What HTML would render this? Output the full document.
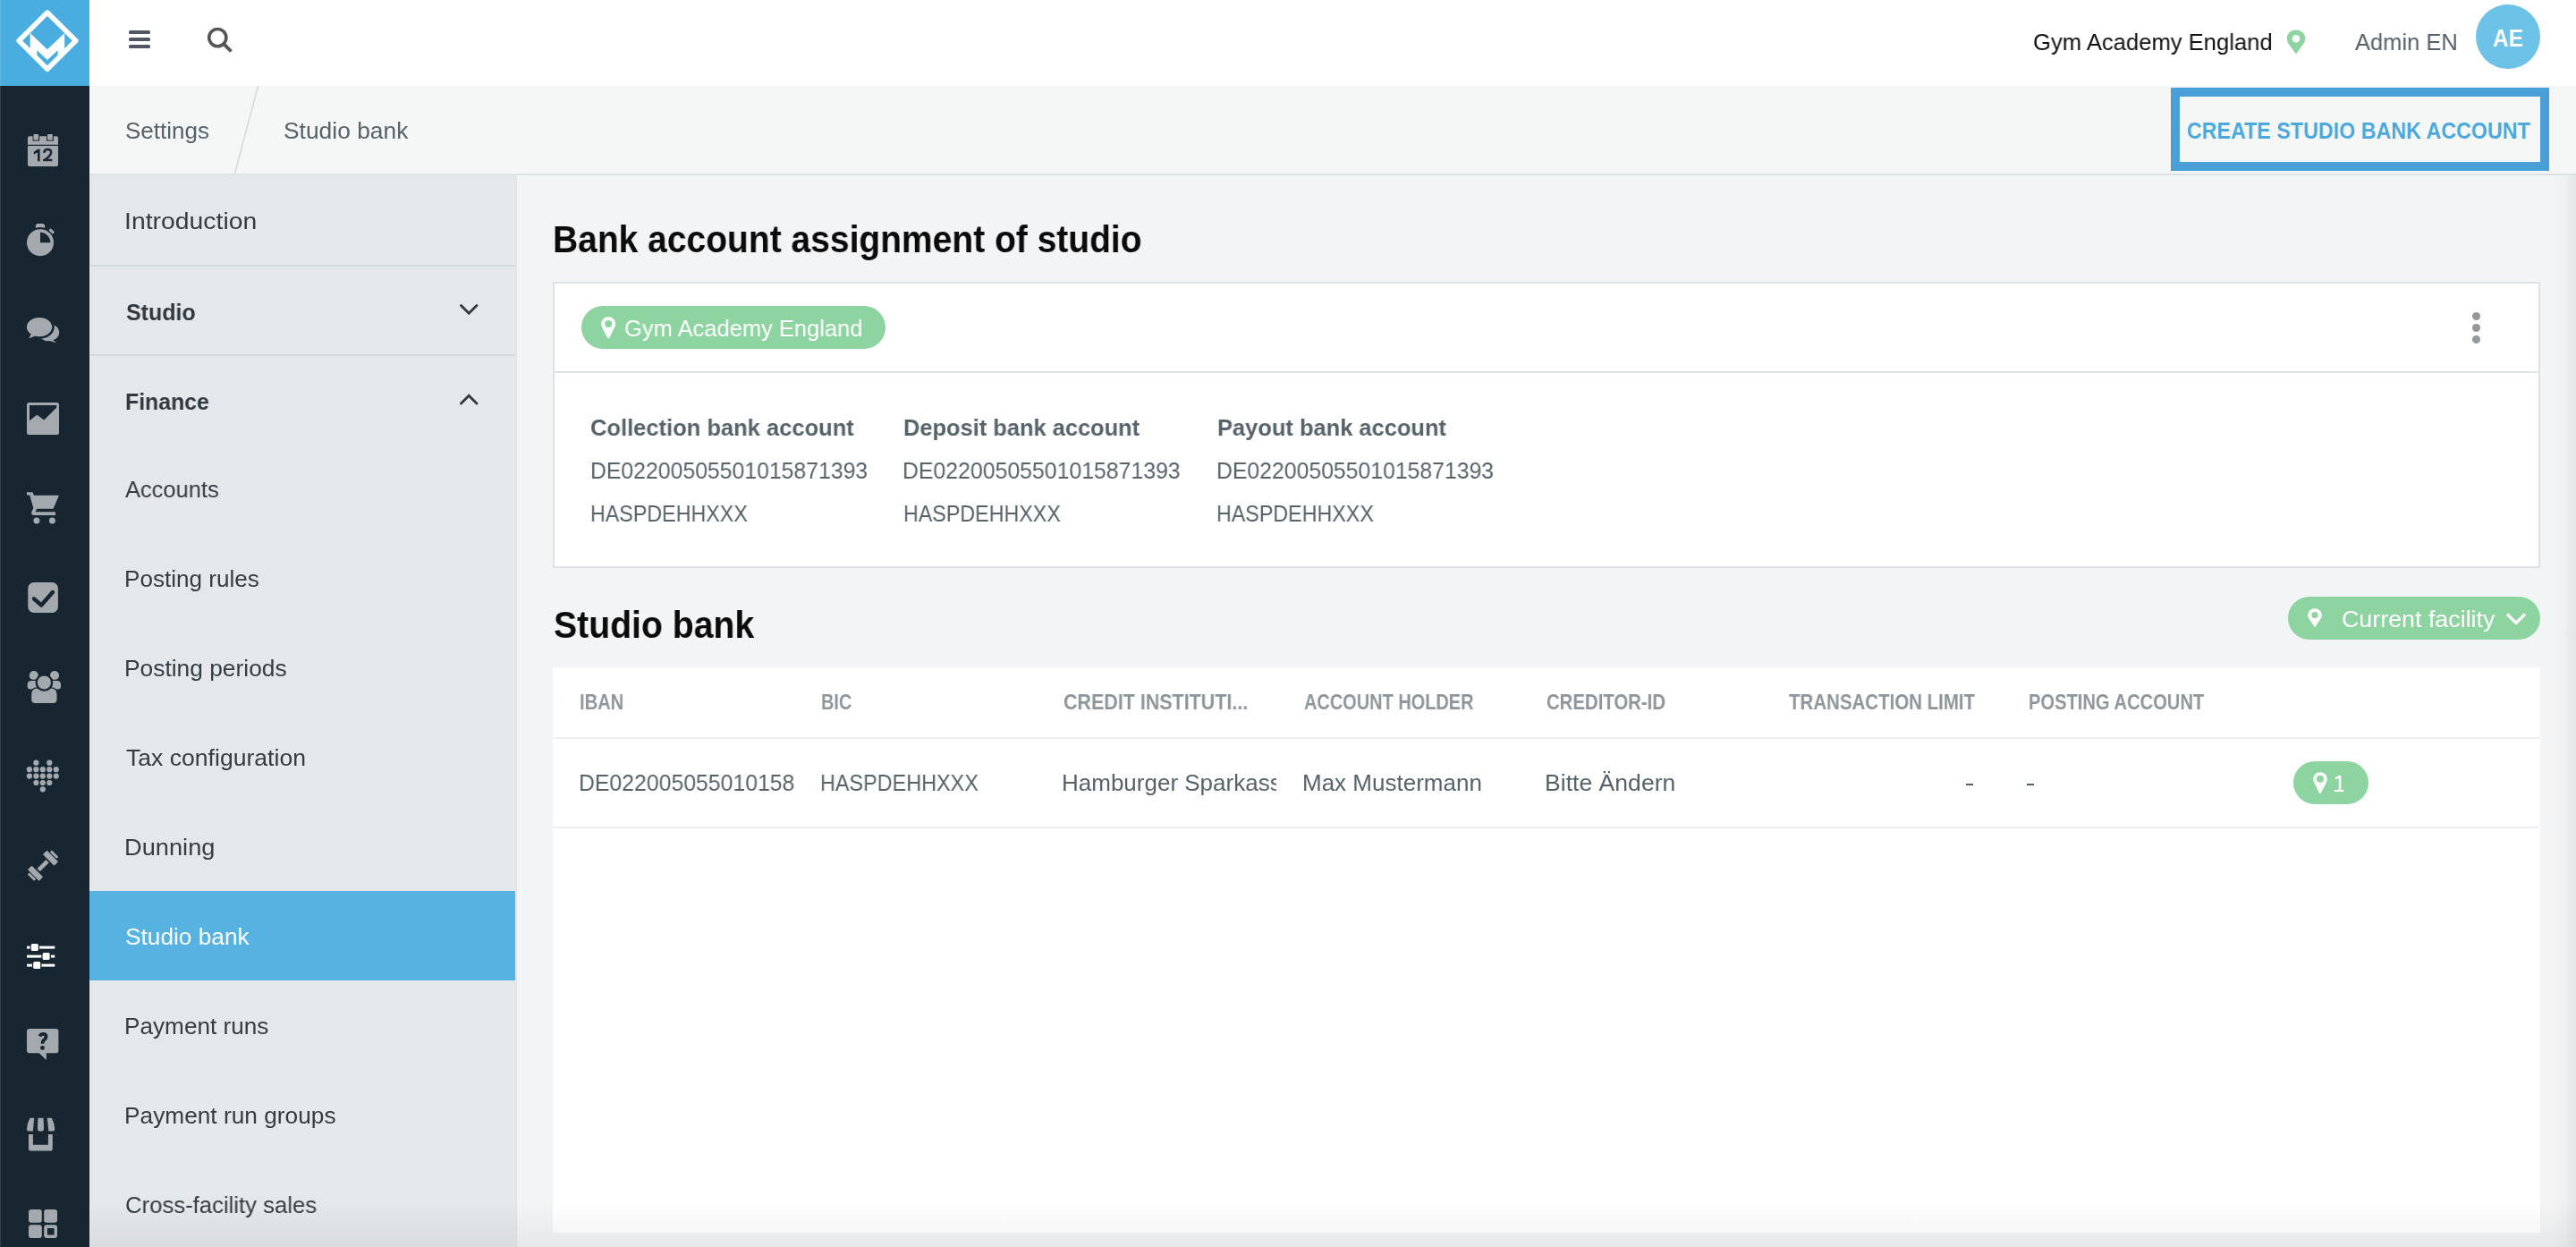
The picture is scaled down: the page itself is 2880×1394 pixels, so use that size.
<!DOCTYPE html>
<html><head><meta charset="utf-8">
<style>
*{box-sizing:border-box;margin:0;padding:0}
html,body{width:2880px;height:1394px;overflow:hidden;background:#f3f4f6;font-family:"Liberation Sans",sans-serif}
.a{position:absolute;white-space:nowrap}
svg.a{overflow:visible}
div.a[id]{will-change:transform}
@media (max-width:2000px){html{zoom:0.5}}
</style></head><body>
<!-- SIDEBAR -->
<div class="a" style="left:0;top:0;width:100px;height:1394px;background:#172631"></div>
<div class="a" style="left:0;top:0;width:100px;height:96px;background:#4aade0"></div>
<svg class="a" style="left:0;top:0" width="100" height="100" viewBox="0 0 1247 1247">
  <path d="M660 176 L1057 568 L660 964 L264 568 Z" fill="none" stroke="#fff" stroke-width="70" stroke-linejoin="round"/>
  <path d="M420 460 L660 690 L900 460 L900 705 L805 800 L805 700 L660 835 L515 700 L515 800 L420 705 Z" fill="#fff"/>
</svg>
<svg class="a" style="left:0;top:96px" width="100" height="1298" viewBox="0 96 100 1298">
 <g fill="#a3a9ad">
  <!-- calendar -->
  <path d="M31 161.8 L31 154.2 Q31 152.2 33 152.2 L63 152.2 Q65 152.2 65 154.2 L65 161.8 Z"/>
  <path d="M31 163 L65 163 L65 184 Q65 186 63 186 L33 186 Q31 186 31 184 Z"/>
  <rect x="36.6" y="148.5" width="7.6" height="9" fill="#172631"/>
  <rect x="52" y="148.5" width="7.9" height="9" fill="#172631"/>
  <rect x="37.5" y="150" width="5.6" height="6.6" rx="1"/>
  <rect x="53" y="150" width="5.8" height="6.6" rx="1"/>
  <path d="M37.8 169.8 L42.2 166.8 L44.6 166.8 L44.6 180.2 L42 180.2 L42 170.4 L37.8 172.6 Z" fill="#172631"/>
  <path d="M49.3 170.8 C49.5 168.3 51.1 166.9 53.2 166.9 C55.6 166.9 57.2 168.4 57.2 170.6 C57.2 172.5 56.1 173.8 54.2 175.5 L50 179" fill="none" stroke="#172631" stroke-width="2.5"/>
  <rect x="48.1" y="177.8" width="10.2" height="2.4" fill="#172631"/>
  <!-- stopwatch -->
  <circle cx="45" cy="271.2" r="15"/>
  <path d="M45 259.8 A11.4 11.4 0 0 1 56.4 271.2 L45 271.2 Z" fill="#172631"/>
  <path d="M39.8 254.7 L39.8 252.5 Q39.8 249.9 42.5 249.9 L47.4 249.9 Q50.1 249.9 50.1 252.5 L50.1 254.7 Q45 253.4 39.8 254.7 Z"/>
  <line x1="56.6" y1="257.3" x2="59" y2="259.7" stroke="#a3a9ad" stroke-width="3.2" stroke-linecap="round"/>
  <!-- chat -->
  <ellipse cx="54.4" cy="371.6" rx="11.8" ry="9.7"/>
  <path d="M57 378.5 L63.3 383.6 L53.5 380.3 Z"/>
  <ellipse cx="44.05" cy="365.6" rx="15.45" ry="11.9" stroke="#172631" stroke-width="2.6"/>
  <path d="M35.5 371.5 L32.4 378.4 L41.5 374.6 Z"/>
  <!-- chart -->
  <rect x="30" y="450" width="36" height="36" rx="2.5"/>
  <path d="M33 453 L63.2 453 L63.2 455.8 L49.3 469.5 L41.3 463.7 L33 470.2 Z" fill="#172631"/>
  <!-- cart -->
  <path d="M30 550.3 L36.5 550.3 L38 553.7 L66 553.7 L59.5 568.8 L41.2 568.8 L39.5 572.3 L62 572.3 L62 576 L38.5 576 Q34.2 576 35.5 571.7 L37.3 568 L33.2 553.6 L30 553.6 Z"/>
  <circle cx="40.9" cy="582" r="3.5"/>
  <circle cx="58.4" cy="582" r="3.5"/>
  <!-- check -->
  <rect x="31.3" y="651" width="33.6" height="34" rx="6.5"/>
  <path d="M38 669.3 L46.2 676.5 L58.9 662" fill="none" stroke="#172631" stroke-width="4.4" stroke-linecap="round" stroke-linejoin="round"/>
  <!-- people -->
  <circle cx="37.8" cy="755.1" r="5.1"/>
  <circle cx="61" cy="755.1" r="5.1"/>
  <path d="M30 767 L30 765.5 Q30 760.4 35 760.4 L42.5 760.4 L42.5 771.2 L34 771.2 Q30 771.2 30 767 Z" stroke="#172631" stroke-width="1.4"/>
  <path d="M68.8 767 L68.8 765.5 Q68.8 760.4 63.8 760.4 L56.3 760.4 L56.3 771.2 L64.8 771.2 Q68.8 771.2 68.8 767 Z" stroke="#172631" stroke-width="1.4"/>
  <path d="M35.2 782 L35.2 776 Q35.2 769.4 41.8 769.4 L57 769.4 Q63.5 769.4 63.5 776 L63.5 782 Q63.5 786 59.5 786 L39.2 786 Q35.2 786 35.2 782 Z" stroke="#172631" stroke-width="2.2"/>
  <path d="M35.2 782 L35.2 776 Q35.2 769.4 41.8 769.4 L57 769.4 Q63.5 769.4 63.5 776 L63.5 782 Q63.5 786 59.5 786 L39.2 786 Q35.2 786 35.2 782 Z"/>
  <circle cx="49.4" cy="762.9" r="8.7" stroke="#172631" stroke-width="2.4"/>
  <!-- heart dots -->
  <circle cx="40.4" cy="852.7" r="3.1"/><circle cx="55.3" cy="852.7" r="3.1"/>
  <circle cx="32.9" cy="860.2" r="3.1"/><circle cx="40.4" cy="860.2" r="3.1"/><circle cx="47.8" cy="860.2" r="3.1"/><circle cx="55.3" cy="860.2" r="3.1"/><circle cx="62.8" cy="860.2" r="3.1"/>
  <circle cx="32.9" cy="867.6" r="3.1"/><circle cx="40.4" cy="867.6" r="3.1"/><circle cx="47.8" cy="867.6" r="3.1"/><circle cx="55.3" cy="867.6" r="3.1"/><circle cx="62.8" cy="867.6" r="3.1"/>
  <circle cx="40.4" cy="875" r="3.1"/><circle cx="47.8" cy="875" r="3.1"/><circle cx="55.3" cy="875" r="3.1"/>
  <circle cx="47.8" cy="882.3" r="3.1"/>
  <!-- dumbbell -->
  <g transform="translate(48.05 967.7) rotate(-45)">
    <rect x="-7" y="-2.3" width="14" height="4.6"/>
    <rect x="-15.2" y="-8.9" width="6.4" height="17.8" rx="0.8"/>
    <rect x="8.8" y="-8.9" width="6.4" height="17.8" rx="0.8"/>
    <rect x="-19.2" y="-5.4" width="3" height="10.8" rx="1.4"/>
    <rect x="16.2" y="-5.4" width="3" height="10.8" rx="1.4"/>
  </g>
  <!-- help -->
  <rect x="30" y="1150" width="35.4" height="27.2" rx="3"/>
  <path d="M43 1176.5 L51.8 1176.5 L51.8 1185 Z"/>
<path d="M44.4 1158.3 C45.3 1156.6 46.7 1155.9 48.4 1155.9 C50.4 1155.9 51.5 1157.3 51.5 1159 C51.5 1160.9 50.2 1161.8 49.2 1162.6 C48.2 1163.4 47.7 1164.3 47.7 1165.6 L47.7 1166.8" fill="none" stroke="#172631" stroke-width="3.8"/><circle cx="47.5" cy="1171.4" r="2.45" fill="#172631"/>
  <!-- shop -->
  <path d="M33.5 1249.8 L38.2 1249.8 L36.8 1264.6 L32 1264.6 Q30 1264.6 30 1262.5 Q30 1256 33.5 1249.8 Z"/>
  <path d="M42.6 1249.8 L48.4 1249.8 Q49.2 1257 48.9 1262.8 Q48.8 1264.6 47 1264.6 L44 1264.6 Q42.2 1264.6 42.1 1262.8 Q41.8 1257 42.6 1249.8 Z"/>
  <path d="M52.8 1249.8 L57.7 1249.8 Q61.2 1256 61.2 1262.5 Q61.2 1264.6 59.2 1264.6 L54.3 1264.6 Z"/>
  <path d="M32 1268 L36.9 1268 L36.9 1279.7 L53.9 1279.7 L53.9 1268 L58.8 1268 L58.8 1284.5 Q58.8 1286.5 56.8 1286.5 L34 1286.5 Q32 1286.5 32 1284.5 Z"/>
  <!-- grid -->
  <rect x="32" y="1352" width="14.8" height="14.8" rx="3"/>
  <rect x="49.2" y="1352" width="14.8" height="14.8" rx="3"/>
  <rect x="32" y="1369.2" width="14.8" height="14.8" rx="3"/>
  <path fill-rule="evenodd" d="M52.2 1369.2 L61 1369.2 Q64 1369.2 64 1372.2 L64 1381 Q64 1384 61 1384 L52.2 1384 Q49.2 1384 49.2 1381 L49.2 1372.2 Q49.2 1369.2 52.2 1369.2 Z M52.9 1373 L52.9 1380.4 L60.6 1380.4 L60.6 1373 Z"/>
 </g>
 <!-- sliders (active, white) -->
 <g fill="#fff">
  <rect x="30" y="1057.6" width="31.3" height="3"/>
  <rect x="30" y="1067.6" width="31.3" height="3"/>
  <rect x="30" y="1077.6" width="31.3" height="3"/>
  <rect x="33.6" y="1053.8" width="10.5" height="10.5" rx="2" fill="#172631"/>
  <rect x="46.4" y="1063.8" width="10.5" height="10.5" rx="2" fill="#172631"/>
  <rect x="36" y="1073.8" width="10.5" height="10.5" rx="2" fill="#172631"/>
  <rect x="34.8" y="1055" width="8" height="8" rx="1.5"/>
  <rect x="47.6" y="1065" width="8" height="8" rx="1.5"/>
  <rect x="37.2" y="1075" width="8" height="8" rx="1.5"/>
 </g>
</svg>
<!-- TOPBAR -->
<div class="a" style="left:100px;top:0;width:2780px;height:96px;background:#fff"></div>
<svg class="a" style="left:144px;top:33px" width="25" height="22" viewBox="0 0 25 22"><rect x="0" y="1" width="24" height="4" rx="1.5" fill="#4f5760"/><rect x="0" y="9" width="24" height="4" rx="1.5" fill="#4f5760"/><rect x="0" y="17" width="24" height="4" rx="1.5" fill="#4f5760"/></svg>
<svg class="a" style="left:228px;top:27px" width="34" height="34" viewBox="0 0 34 34"><circle cx="15.3" cy="15.1" r="9.6" fill="none" stroke="#555" stroke-width="3.6"/><path d="M22 22 L30.5 30.5" stroke="#555" stroke-width="3.8"/></svg>
<svg class="a" style="left:2556px;top:33px" width="22" height="28" viewBox="0 0 22 28"><path d="M11 0.5 C5 0.5 0.8 4.8 0.8 10 C0.8 12.5 1.6 14.3 3 16.4 L11 27.5 L19 16.4 C20.4 14.3 21.2 12.5 21.2 10 C21.2 4.8 17 0.5 11 0.5 Z" fill="#8dd4a0"/><circle cx="11" cy="10.3" r="4.3" fill="#fff"/></svg>
<div class="a" style="left:2768px;top:5px;width:72px;height:72px;border-radius:50%;background:#6cc2e7"></div>
<!-- CRUMB -->
<div class="a" style="left:100px;top:96px;width:2780px;height:100px;background:#f5f6f6;border-bottom:2px solid #dce3e6"></div>
<svg class="a" style="left:260px;top:96px" width="32" height="100" viewBox="0 0 32 100"><path d="M28.5 0 L2.5 98" stroke="#d3dbdf" stroke-width="1.6"/></svg>
<div class="a" style="left:2427px;top:98px;width:423px;height:93px;border:10px solid #4a9fd6"></div>
<!-- MENU -->
<div class="a" style="left:100px;top:196px;width:478px;height:1198px;background:#e5e8eb;border-right:1px solid #dde2e5"></div>
<div class="a" style="left:100px;top:296px;width:476px;height:2px;background:#d3dadd"></div>
<div class="a" style="left:100px;top:396px;width:476px;height:2px;background:#d3dadd"></div>
<div class="a" style="left:100px;top:996px;width:476px;height:100px;background:#56b2e0"></div>
<svg class="a" style="left:510px;top:335px" width="30" height="125" viewBox="0 0 30 125"><path d="M5.5 6.5 L14.2 15.3 L23 6.5" fill="none" stroke="#333b40" stroke-width="2.9" stroke-linecap="round"/><path d="M5.5 116 L14.2 107.3 L23 116" fill="none" stroke="#333b40" stroke-width="2.9" stroke-linecap="round"/></svg>
<!-- MAIN -->
<div class="a" style="left:618px;top:315px;width:2222px;height:320px;background:#fff;border:2px solid #dce3e6"></div>
<div class="a" style="left:620px;top:415px;width:2218px;height:2px;background:#dce3e6"></div>
<div class="a" style="left:650px;top:342px;width:340px;height:48px;border-radius:24px;background:#8ed4a1"></div>
<svg class="a" style="left:672px;top:354px" width="17" height="25" viewBox="0 0 17 25"><path d="M8.2 0.2 C3.7 0.2 0.2 3.7 0.2 8 C0.2 9.6 0.6 10.7 1.2 12 L7 23.6 C7.5 24.6 8.9 24.6 9.4 23.6 L15 12 C15.6 10.7 16.2 9.6 16.2 8 C16.2 3.7 12.7 0.2 8.2 0.2 Z" fill="#fff"/><circle cx="8.2" cy="7.9" r="4" fill="#8ed4a1"/></svg>
<div class="a" style="left:2764px;top:349px;width:9px;height:9px;border-radius:50%;background:#95999d"></div>
<div class="a" style="left:2764px;top:362px;width:9px;height:9px;border-radius:50%;background:#95999d"></div>
<div class="a" style="left:2764px;top:375px;width:9px;height:9px;border-radius:50%;background:#95999d"></div>
<div class="a" style="left:2558px;top:667px;width:282px;height:48px;border-radius:24px;background:#8ed4a1"></div>
<svg class="a" style="left:2580px;top:680px" width="17" height="22" viewBox="0 0 17 22"><path d="M8 0.2 C3.6 0.2 0.2 3.5 0.2 7.6 C0.2 9.1 0.6 10.2 1.3 11.3 L8 21.5 L14.7 11.3 C15.4 10.2 15.8 9.1 15.8 7.6 C15.8 3.5 12.4 0.2 8 0.2 Z" fill="#fff"/><circle cx="8" cy="7.5" r="3.6" fill="#8ed4a1"/></svg>
<svg class="a" style="left:2801px;top:684px" width="24" height="16" viewBox="0 0 24 16"><path d="M2 2.5 L12 12.5 L22 2.5" fill="none" stroke="#fff" stroke-width="3.2"/></svg>
<div class="a" style="left:618px;top:746px;width:2222px;height:632px;background:#fff"></div>
<div class="a" style="left:618px;top:824px;width:2222px;height:2px;background:#eceeef"></div>
<div class="a" style="left:618px;top:924px;width:2220px;height:2px;background:#eceeef"></div>
<div class="a" style="left:2198px;top:876px;width:8px;height:2px;background:#56636b"></div>
<div class="a" style="left:2266px;top:876px;width:8px;height:2px;background:#56636b"></div>
<div class="a" style="left:2564px;top:851px;width:84px;height:48px;border-radius:24px;background:#8ed4a1"></div>
<svg class="a" style="left:2586px;top:863px" width="17" height="25" viewBox="0 0 17 25"><path d="M8 0.2 C3.6 0.2 0.2 3.6 0.2 7.8 C0.2 9.4 0.6 10.5 1.2 11.8 L6.9 23.3 C7.4 24.3 8.6 24.3 9.1 23.3 L14.8 11.8 C15.4 10.5 15.8 9.4 15.8 7.8 C15.8 3.6 12.4 0.2 8 0.2 Z" fill="#fff"/><circle cx="8" cy="7.7" r="4" fill="#8ed4a1"/></svg>
<svg class="a" style="left:2600px;top:860px" width="30" height="30" viewBox="2600 860 30 30"><path d="M2614.8 867 L2617.3 867 L2617.3 882.9 L2620.3 882.9 L2620.3 884.9 L2609.9 884.9 L2609.9 882.9 L2614.8 882.9 L2614.8 869.8 L2610.9 871.2 L2610.9 869.1 Z" fill="#fff"/></svg>
<div class="a" id="gtop" style="left:2272.71px;top:34.00px;font-size:26px;line-height:26px;color:#111;transform:scaleX(0.9853);transform-origin:0 0;">Gym Academy England</div>
<div class="a" id="admin" style="left:2633.00px;top:34.00px;font-size:26px;line-height:26px;color:#55626b;transform:scaleX(0.9804);transform-origin:0 0;">Admin EN</div>
<div class="a" id="ae" style="left:2786.60px;top:29.00px;font-size:28px;line-height:28px;color:#fff;font-weight:bold;transform:scaleX(0.8765);transform-origin:0 0;">AE</div>
<div class="a" id="cset" style="left:140.20px;top:133.00px;font-size:26px;line-height:26px;color:#56636b;">Settings</div>
<div class="a" id="csb" style="left:316.98px;top:133.00px;font-size:26px;line-height:26px;color:#56636b;transform:scaleX(1.0151);transform-origin:0 0;">Studio bank</div>
<div class="a" id="btn" style="left:2444.61px;top:133.00px;font-size:26px;line-height:26px;color:#4aa8dc;font-weight:bold;transform:scaleX(0.8950);transform-origin:0 0;">CREATE STUDIO BANK ACCOUNT</div>
<div class="a" id="m1" style="left:138.62px;top:234.00px;font-size:26px;line-height:26px;color:#333d43;transform:scaleX(1.0913);transform-origin:0 0;">Introduction</div>
<div class="a" id="m2" style="left:140.80px;top:336.00px;font-size:26px;line-height:26px;color:#2e383e;font-weight:bold;transform:scaleX(0.9602);transform-origin:0 0;">Studio</div>
<div class="a" id="m3" style="left:139.85px;top:436.00px;font-size:26px;line-height:26px;color:#2e383e;font-weight:bold;transform:scaleX(0.9547);transform-origin:0 0;">Finance</div>
<div class="a" id="m4" style="left:140.40px;top:534.00px;font-size:26px;line-height:26px;color:#333d43;transform:scaleX(0.9790);transform-origin:0 0;">Accounts</div>
<div class="a" id="m5" style="left:139.19px;top:634.00px;font-size:26px;line-height:26px;color:#333d43;transform:scaleX(1.0040);transform-origin:0 0;">Posting rules</div>
<div class="a" id="m6" style="left:139.17px;top:734.00px;font-size:26px;line-height:26px;color:#333d43;transform:scaleX(1.0134);transform-origin:0 0;">Posting periods</div>
<div class="a" id="m7" style="left:141.20px;top:834.00px;font-size:26px;line-height:26px;color:#333d43;transform:scaleX(1.0225);transform-origin:0 0;">Tax configuration</div>
<div class="a" id="m8" style="left:139.11px;top:934.00px;font-size:26px;line-height:26px;color:#333d43;transform:scaleX(1.0472);transform-origin:0 0;">Dunning</div>
<div class="a" id="m9" style="left:140.19px;top:1034.00px;font-size:26px;line-height:26px;color:#fff;transform:scaleX(1.0100);transform-origin:0 0;">Studio bank</div>
<div class="a" id="m10" style="left:139.19px;top:1134.00px;font-size:26px;line-height:26px;color:#333d43;transform:scaleX(1.0063);transform-origin:0 0;">Payment runs</div>
<div class="a" id="m11" style="left:139.18px;top:1234.00px;font-size:26px;line-height:26px;color:#333d43;transform:scaleX(1.0102);transform-origin:0 0;">Payment run groups</div>
<div class="a" id="m12" style="left:140.21px;top:1334.00px;font-size:26px;line-height:26px;color:#333d43;transform:scaleX(0.9879);transform-origin:0 0;">Cross-facility sales</div>
<div class="a" id="h1" style="left:617.64px;top:247.00px;font-size:42px;line-height:42px;color:#0b0b0b;font-weight:bold;transform:scaleX(0.9283);transform-origin:0 0;">Bank account assignment of studio</div>
<div class="a" id="pill1" style="left:697.72px;top:354.00px;font-size:26px;line-height:26px;color:#fff;transform:scaleX(0.9809);transform-origin:0 0;">Gym Academy England</div>
<div class="a" id="c1h" style="left:660.22px;top:465.00px;font-size:26px;line-height:26px;color:#56636b;font-weight:bold;transform:scaleX(0.9809);transform-origin:0 0;">Collection bank account</div>
<div class="a" id="c1a" style="left:659.59px;top:513.00px;font-size:26px;line-height:26px;color:#56636b;transform:scaleX(0.9534);transform-origin:0 0;">DE02200505501015871393</div>
<div class="a" id="c1b" style="left:659.71px;top:561.00px;font-size:26px;line-height:26px;color:#56636b;transform:scaleX(0.8946);transform-origin:0 0;">HASPDEHHXXX</div>
<div class="a" id="c2h" style="left:1010.02px;top:465.00px;font-size:26px;line-height:26px;color:#56636b;font-weight:bold;transform:scaleX(0.9777);transform-origin:0 0;">Deposit bank account</div>
<div class="a" id="c2a" style="left:1009.39px;top:513.00px;font-size:26px;line-height:26px;color:#56636b;transform:scaleX(0.9549);transform-origin:0 0;">DE02200505501015871393</div>
<div class="a" id="c2b" style="left:1009.51px;top:561.00px;font-size:26px;line-height:26px;color:#56636b;transform:scaleX(0.8946);transform-origin:0 0;">HASPDEHHXXX</div>
<div class="a" id="c3h" style="left:1360.72px;top:465.00px;font-size:26px;line-height:26px;color:#56636b;font-weight:bold;transform:scaleX(0.9788);transform-origin:0 0;">Payout bank account</div>
<div class="a" id="c3a" style="left:1360.09px;top:513.00px;font-size:26px;line-height:26px;color:#56636b;transform:scaleX(0.9531);transform-origin:0 0;">DE02200505501015871393</div>
<div class="a" id="c3b" style="left:1360.21px;top:561.00px;font-size:26px;line-height:26px;color:#56636b;transform:scaleX(0.8946);transform-origin:0 0;">HASPDEHHXXX</div>
<div class="a" id="h2" style="left:618.97px;top:678.00px;font-size:42px;line-height:42px;color:#0b0b0b;font-weight:bold;transform:scaleX(0.9330);transform-origin:0 0;">Studio bank</div>
<div class="a" id="cf" style="left:2617.87px;top:679.00px;font-size:26px;line-height:26px;color:#fff;transform:scaleX(1.0318);transform-origin:0 0;">Current facility</div>
<div class="a" id="th1" style="left:648.22px;top:774.00px;font-size:23px;line-height:23px;color:#8f969b;font-weight:bold;transform:scaleX(0.8771);transform-origin:0 0;">IBAN</div>
<div class="a" id="th2" style="left:918.43px;top:774.00px;font-size:23px;line-height:23px;color:#8f969b;font-weight:bold;transform:scaleX(0.8658);transform-origin:0 0;">BIC</div>
<div class="a" id="th3" style="left:1188.90px;top:774.00px;font-size:23px;line-height:23px;color:#8f969b;font-weight:bold;transform:scaleX(0.9328);transform-origin:0 0;">CREDIT INSTITUTI...</div>
<div class="a" id="th4" style="left:1458.40px;top:774.00px;font-size:23px;line-height:23px;color:#8f969b;font-weight:bold;transform:scaleX(0.8671);transform-origin:0 0;">ACCOUNT HOLDER</div>
<div class="a" id="th5" style="left:1728.90px;top:774.00px;font-size:23px;line-height:23px;color:#8f969b;font-weight:bold;transform:scaleX(0.8848);transform-origin:0 0;">CREDITOR-ID</div>
<div class="a" id="th6" style="left:1999.50px;top:774.00px;font-size:23px;line-height:23px;color:#8f969b;font-weight:bold;transform:scaleX(0.8898);transform-origin:0 0;">TRANSACTION LIMIT</div>
<div class="a" id="th7" style="left:2268.42px;top:774.00px;font-size:23px;line-height:23px;color:#8f969b;font-weight:bold;transform:scaleX(0.8756);transform-origin:0 0;">POSTING ACCOUNT</div>
<div class="a" id="td1" style="left:647.19px;top:862.00px;font-size:26px;line-height:26px;color:#56636b;transform:scaleX(0.9539);transform-origin:0 0;">DE022005055010158</div>
<div class="a" id="td2" style="left:917.00px;top:862.00px;font-size:26px;line-height:26px;color:#56636b;transform:scaleX(0.8998);transform-origin:0 0;">HASPDEHHXXX</div>
<div class="a" style="left:0;top:0;width:1427px;height:1394px;overflow:hidden"><div class="a" id="td3" style="left:1187.00px;top:862.00px;font-size:26px;line-height:26px;color:#56636b;">Hamburger Sparkasse</div></div>
<div class="a" id="td4" style="left:1456.40px;top:862.00px;font-size:26px;line-height:26px;color:#56636b;">Max Mustermann</div>
<div class="a" id="td5" style="left:1726.55px;top:862.00px;font-size:26px;line-height:26px;color:#56636b;transform:scaleX(1.0227);transform-origin:0 0;">Bitte &Auml;ndern</div>
<!-- SHADOWS -->
<div class="a" style="left:0;top:0;width:1px;height:1394px;background:rgba(255,255,255,0.12)"></div>
<div class="a" style="left:100px;top:1344px;width:2780px;height:50px;background:linear-gradient(to bottom,rgba(40,45,45,0),rgba(40,45,45,0.035) 60%,rgba(40,45,45,0.06))"></div>
<div class="a" style="left:2855px;top:196px;width:25px;height:1198px;background:linear-gradient(to right,rgba(30,40,50,0),rgba(30,40,50,0.025) 55%,rgba(30,40,50,0.07))"></div>
</body></html>
